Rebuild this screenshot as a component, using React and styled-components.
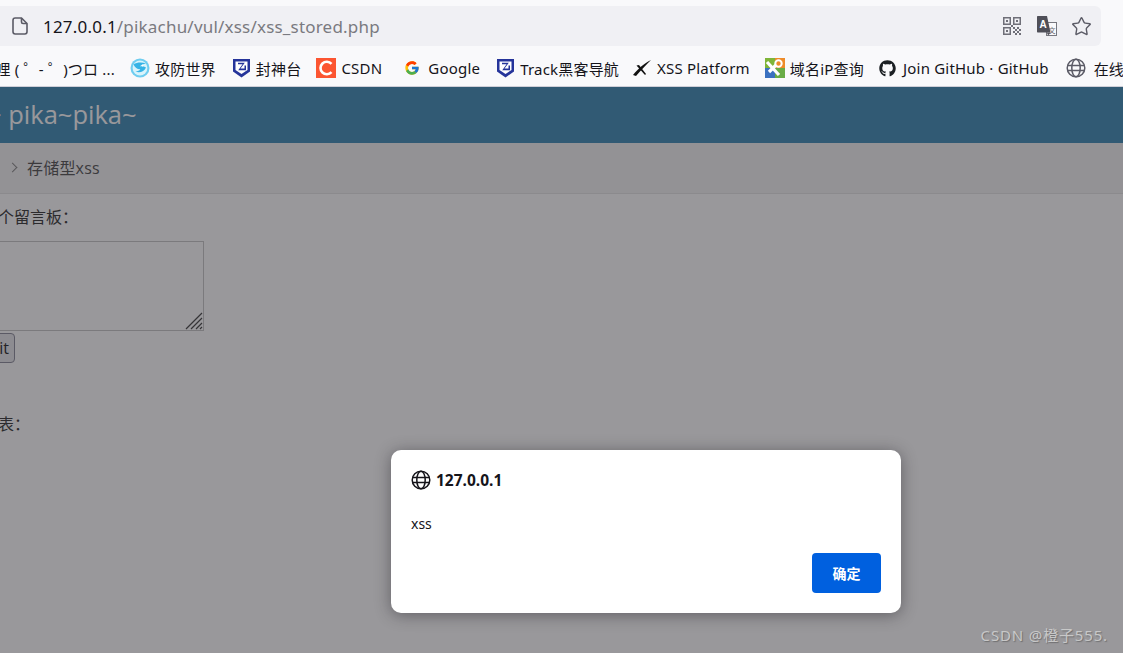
import React from "react";
import styled, { createGlobalStyle } from "styled-components";
import { FcGoogle } from "react-icons/fc";
import { FaGithub } from "react-icons/fa";
import { Star } from "lucide-react";

const GlobalStyle = createGlobalStyle`
  html, body {
    margin: 0;
    padding: 0;
    width: 1123px;
    height: 653px;
    overflow: hidden;
    background: #f9f9fb;
    font-family: "Open Sans", "Noto Sans CJK SC", sans-serif;
  }
`;

const DocIcon = () => (
  <svg width="16" height="18" viewBox="0 0 16 18" fill="none" stroke="#5b5b66" strokeWidth="1.6">
    <path d="M3.2 1h6.3L15 6.5v8.3c0 1.2-1 2.2-2.2 2.2H3.2C2 17 1 16 1 14.8V3.2C1 2 2 1 3.2 1z" />
    <path d="M9.5 1v4c0 .9.6 1.5 1.5 1.5h4" />
  </svg>
);

const QrIcon = () => (
  <svg width="19" height="18" viewBox="0 0 19 18" fill="#6f6f78">
    <path fillRule="evenodd" d="M0 0h8v8H0zM1.500 1.500v5h5v-5zM10 0h8v8h-8zM11.500 1.500v5h5v-5zM0 10h8v8H0zM1.500 11.500v5h5v-5z" />
    <path d="M3 3h2v2H3zM13 3h2v2h-2zM3 13h2v2H3zM10 10h2v2h-2zM14 10h2v2h-2zM12 12h2v2h-2zM16 12h2v2h-2zM10 14h2v2h-2zM14 14h2v2h-2zM12 16h2v2h-2zM16 16h2v2h-2zM8 8h2v2H8z" />
  </svg>
);

const TranslateIcon = () => (
  <svg width="21" height="20" viewBox="-1 0 21 20">
    <rect x="9.500" y="6.500" width="10" height="13" fill="#f9f9fb" stroke="#77777f" />
    <text x="11.500" y="16.500" fontSize="7" fontFamily="Noto Sans CJK SC, sans-serif" fill="#66666e">文</text>
    <path d="M0 1C0 .4.400 0 1 0h9l3.500 16.500H1c-.6 0-1-.4-1-1z" fill="#4f4f58" />
    <path d="M9.800 16.500l1.400 3 2.300-3z" fill="#4f4f58" />
    <text x="2.500" y="12" fontSize="10" fontWeight="700" fontFamily="Liberation Sans, sans-serif" fill="#fff">A</text>
  </svg>
);

const GlobeIcon = ({ size = 20, color = "#5b5b66" }) => (
  <svg width={size} height={size} viewBox="0 0 20 20" fill="none" stroke={color} strokeWidth="1.500">
    <circle cx="10" cy="10" r="8.800" />
    <ellipse cx="10" cy="10" rx="4.200" ry="8.800" />
    <path d="M1.500 7.500h17M1.500 12.500h17" />
  </svg>
);

const SwirlIcon = () => (
  <svg width="20" height="20" viewBox="0 0 20 20">
    <circle cx="10" cy="10" r="9.500" fill="#6fcdf0" />
    <circle cx="10" cy="10" r="7.400" fill="#d8f3fb" />
    <path d="M3.500 6.500C7 4 12 4 16 5.500c-3 .6-5.200 1.500-6.200 3 2.200-.3 4.400-.1 6.200 1-1.500 3.800-6.500 6-10.500 4 2.300-.2 4-1 4.800-2.300-2.700.2-5.300-1.300-6.800-4.700z" fill="#35b3e6" />
    <circle cx="12.500" cy="7.500" r="0.900" fill="#fff" />
  </svg>
);

const ShieldIcon = () => (
  <svg width="17" height="20" viewBox="0 0 17 20">
    <path d="M0 1h17v12.500l-8.500 6L0 13.500z" fill="#25349a" />
    <path d="M2.500 3.500h12V12L8.500 16 2.500 12z" fill="#fff" />
    <path d="M5 4.800h6.800L7.500 10.500h4V7.500h1.500V12.300H5.200l4.400-6H5z" fill="#25349a" />
  </svg>
);

const CsdnIcon = () => (
  <svg width="20" height="20" viewBox="0 0 20 20">
    <rect width="20" height="20" fill="#fc5531" />
    <path d="M15.500 5.800A6.300 6.300 0 1 0 15.500 14.200" fill="none" stroke="#fff" strokeWidth="2.600" />
  </svg>
);

const CrossIcon = () => (
  <svg width="18" height="18" viewBox="0 0 18 18" fill="#111">
    <path d="M0 16C5 10 10 5 18 1c-5 5-10 10-15 16z" />
    <path d="M3.500 6.500L6 6l7 9-1 1z" />
  </svg>
);

const ToolsIcon = () => (
  <svg width="20" height="20" viewBox="0 0 20 20">
    <rect width="10" height="10" fill="#7fb539" />
    <rect x="10" width="10" height="10" fill="#ee8c2a" />
    <rect y="10" width="10" height="10" fill="#3b71c0" />
    <rect x="10" y="10" width="10" height="10" fill="#69ac46" />
    <path d="M2 4l12 13" stroke="#fff" strokeWidth="3.200" />
    <path d="M4 14l7-7" stroke="#fff" strokeWidth="3.200" />
    <circle cx="13.500" cy="5.500" r="3.200" fill="#ee8c2a" stroke="#fff" strokeWidth="2" />
  </svg>
);

const HandleIcon = () => (
  <svg width="18" height="18" viewBox="0 0 18 18" stroke="#4a4a4a" strokeWidth="1.200">
    <path d="M1 17L17 1M6 17L17 6M11 17l6-6M15 17l2-2" />
  </svg>
);

const bookmarks = [
  { icon: <SwirlIcon />, label: "攻防世界", gap: 5, trail: 1 },
  { icon: <ShieldIcon />, label: "封神台", gap: 6, trail: -1 },
  { icon: <CsdnIcon />, label: "CSDN", gap: 5, trail: 6 },
  { icon: <FcGoogle size={16} />, label: "Google", gap: 8, trail: 1 },
  { icon: <ShieldIcon />, label: "Track黑客导航", gap: 6, trail: -2 },
  { icon: <CrossIcon />, label: "XSS Platform", gap: 6, trail: -1 },
  { icon: <ToolsIcon />, label: "域名iP查询", gap: 5, trail: -1 },
  { icon: <FaGithub size={17} color="#1b1f23" />, label: "Join GitHub · GitHub", gap: 7, trail: 1 },
  { icon: <GlobeIcon />, label: "在线工具大全", gap: 8 },
];

const Toolbar = styled.header`
  height: 87px;
  box-sizing: border-box;
  padding-top: 6px;
  background: #f9f9fb;
  border-bottom: 1px solid #cfcfd8;
`;

const AddressBar = styled.div`
  width: 1101px;
  height: 40px;
  box-sizing: border-box;
  display: flex;
  align-items: center;
  padding: 0 9px 0 12px;
  background: #f0f0f4;
  border-radius: 0 6px 6px 0;
`;

const Url = styled.div`
  flex: 1;
  margin-left: 15px;
  font-size: 17px;
  letter-spacing: 0.2px;
  color: #7a7a80;
  font-family: "Noto Sans", sans-serif;
`;

const Host = styled.span`
  color: #15141a;
`;

const AddressActions = styled.div`
  display: flex;
  align-items: center;
  gap: 14px;
`;

const BookmarkBar = styled.nav`
  height: 36px;
  margin-top: 4px;
  display: flex;
  align-items: center;
  gap: 16px;
  overflow: hidden;
  white-space: nowrap;
  font-family: "Noto Sans", "Noto Sans CJK SC", sans-serif;
  font-size: 15px;
  letter-spacing: 0.2px;
  color: #15141a;
`;

const Bookmark = styled.div`
  display: flex;
  align-items: center;
  flex: none;
  gap: ${(p) => p.$gap}px;
  margin-right: ${(p) => p.$trail || 0}px;
`;

const ClippedBookmark = styled.div`
  flex: none;
  margin-left: -12px;
  width: 127px;
  margin-right: -1px;
  display: flex;
  justify-content: flex-end;
`;

const Page = styled.main`
  position: relative;
  height: 566px;
  overflow: hidden;
  background: #fff;
  color: #393939;
`;

const SiteHeader = styled.div`
  height: 56px;
  box-sizing: border-box;
  padding-bottom: 3px;
  display: flex;
  align-items: center;
  background: #438eb9;
  color: #fff;
  font-size: 25.500px;
  white-space: nowrap;
`;

const SiteTitle = styled.div`
  margin-left: -13px;
`;

const Crumbs = styled.div`
  height: 51px;
  box-sizing: border-box;
  display: flex;
  align-items: center;
  padding: 0 0 2px 9px;
  gap: 11px;
  background: #f5f5f5;
  border-bottom: 1px solid #e5e5e5;
  font-size: 16px;
  letter-spacing: 0.2px;
  color: #555;
`;

const Chevron = styled.span`
  width: 6px;
  height: 6px;
  border-top: 1.500px solid #8a8a8a;
  border-right: 1.500px solid #8a8a8a;
  transform: rotate(45deg);
`;

const Content = styled.section`
  display: flex;
  flex-direction: column;
  align-items: flex-start;
  margin-left: -50px;
`;

const Label = styled.p`
  margin: ${(p) => p.$top}px 0 0;
  font-size: 16px;
  line-height: 22px;
  white-space: nowrap;
`;

const AreaWrap = styled.div`
  position: relative;
  margin-top: 13px;
  height: 90px;
`;

const Area = styled.textarea`
  display: block;
  width: 254px;
  height: 90px;
  box-sizing: border-box;
  resize: none;
  background: #fff;
  border: 1px solid #c9c9c9;
  outline: none;
`;

const Handle = styled.div`
  position: absolute;
  right: 1px;
  bottom: 1px;
  height: 18px;
`;

const Submit = styled.button`
  margin-top: 2px;
  width: 65px;
  height: 30px;
  padding: 0 5px 0 0;
  background: #e9e9ed;
  border: 1px solid #8f8f9d;
  border-radius: 4px;
  font: 16px "Open Sans", sans-serif;
  color: #2b2b2b;
  text-align: right;
`;

const Backdrop = styled.div`
  position: absolute;
  inset: 0;
  background: rgba(28, 27, 34, 0.45);
`;

const Dialog = styled.div`
  position: absolute;
  left: 391px;
  top: 363px;
  width: 510px;
  height: 163px;
  box-sizing: border-box;
  padding: 20px;
  display: flex;
  flex-direction: column;
  background: #fff;
  border-radius: 10px;
  box-shadow: 0 2px 16px rgba(28, 27, 34, 0.45);
  font-family: "Noto Sans", "Noto Sans CJK SC", sans-serif;
  color: #15141a;
`;

const DialogTitle = styled.div`
  display: flex;
  align-items: center;
  gap: 5px;
  font-size: 15.500px;
  font-weight: 700;
  line-height: 20px;
`;

const DialogMessage = styled.div`
  margin-top: 24px;
  font-size: 14px;
  line-height: 20px;
`;

const DialogActions = styled.div`
  margin-top: auto;
  display: flex;
  justify-content: flex-end;
`;

const OkButton = styled.button`
  width: 69px;
  height: 40px;
  border: 0;
  border-radius: 4px;
  background: #0060df;
  color: #fff;
  font: 700 14px "Noto Sans CJK SC", sans-serif;
`;

const Watermark = styled.div`
  position: absolute;
  right: 15px;
  bottom: 8px;
  font-family: "Noto Sans", "Noto Sans CJK SC", sans-serif;
  font-size: 15px;
  letter-spacing: 0.85px;
  color: #c8c8c8;
  text-shadow: 1px 1px 1px rgba(70, 70, 70, 0.5);
  white-space: nowrap;
`;

export default function App() {
  return (
    <>
      <GlobalStyle />
      <Toolbar>
        <AddressBar>
          <DocIcon />
          <Url>
            <Host>127.0.0.1</Host>/pikachu/vul/xss/xss_stored.php
          </Url>
          <AddressActions>
            <QrIcon />
            <TranslateIcon />
            <Star size={21} color="#5b5b66" strokeWidth={1.6} />
          </AddressActions>
        </AddressBar>
        <BookmarkBar>
          <ClippedBookmark>哔哩 ( ゜- ゜)つロ ...</ClippedBookmark>
          {bookmarks.map((b) => (
            <Bookmark key={b.label} $gap={b.gap} $trail={b.trail}>
              {b.icon}
              <span>{b.label}</span>
            </Bookmark>
          ))}
        </BookmarkBar>
      </Toolbar>
      <Page>
        <SiteHeader>
          <SiteTitle>~ pika~pika~</SiteTitle>
        </SiteHeader>
        <Crumbs>
          <Chevron />
          <span>存储型xss</span>
        </Crumbs>
        <Content>
          <Label $top={12}>我是一个留言板：</Label>
          <AreaWrap>
            <Area />
            <Handle>
              <HandleIcon />
            </Handle>
          </AreaWrap>
          <Submit>submit</Submit>
          <Label $top={50}>留言列表：</Label>
        </Content>
        <Backdrop />
        <Dialog>
          <DialogTitle>
            <GlobeIcon color="#15141a" />
            127.0.0.1
          </DialogTitle>
          <DialogMessage>xss</DialogMessage>
          <DialogActions>
            <OkButton>确定</OkButton>
          </DialogActions>
        </Dialog>
        <Watermark>CSDN @橙子555.</Watermark>
      </Page>
    </>
  );
}
